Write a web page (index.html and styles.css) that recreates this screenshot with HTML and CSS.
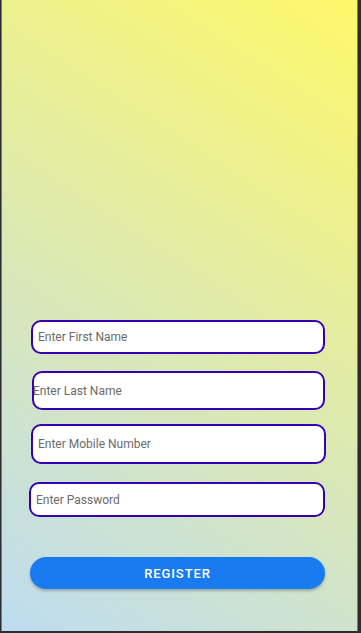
FILE: index.html
```html
<!DOCTYPE html>
<html lang="en">
<head>
<meta charset="utf-8">
<title>Register</title>
<link rel="stylesheet" href="styles.css">
</head>
<body>
<div class="frame">
  <form class="form">
    <input class="field field-first" type="text" placeholder="Enter First Name">
    <input class="field field-last" type="text" placeholder="Enter Last Name">
    <input class="field field-mobile" type="text" placeholder="Enter Mobile Number">
    <input class="field field-pass" type="password" placeholder="Enter Password">
    <button class="register" type="button">REGISTER</button>
  </form>
</div>
</body>
</html>
```

FILE: styles.css
```css
html, body {
  margin: 0;
  padding: 0;
}
body {
  width: 361px;
  height: 633px;
  background: #2b2d30;
  overflow: hidden;
  font-family: Roboto, "Noto Sans", sans-serif;
}
.frame {
  box-sizing: border-box;
  margin-left: 1px;
  width: 357px;
  height: 631px;
  border-left: 1px solid #2f8fe4;
  border-right: 1px solid #2f8fe4;
  background: linear-gradient(213deg, #fef86a 0%, #bedcf1 100%);
}
.form {
  display: flex;
  flex-direction: column;
  align-items: flex-start;
  padding-top: 320px;
  margin: 0;
}
.field {
  box-sizing: border-box;
  display: block;
  margin: 0;
  border: 2px solid #3700b3;
  border-radius: 10px;
  background: #ffffff;
  padding: 0 0 0 5px;
  font-family: Roboto, "Noto Sans", sans-serif;
  font-size: 12px;
  color: #555555;
  outline: none;
}
.field::placeholder {
  color: #6b6b6b;
  opacity: 1;
}
.field-first {
  margin-left: 29px;
  width: 294px;
  height: 34px;
}
.field-last {
  margin-top: 17px;
  margin-left: 30px;
  width: 293px;
  height: 39px;
  padding-left: 0;
  text-indent: -1px;
}
.field-mobile {
  margin-top: 14px;
  margin-left: 29px;
  width: 295px;
  height: 40px;
}
.field-pass {
  margin-top: 18px;
  margin-left: 27px;
  width: 296px;
  height: 35px;
}
.register {
  margin-top: 40px;
  margin-left: 28px;
  width: 295px;
  height: 32px;
  border: none;
  border-radius: 16px;
  background: #1a7bf1;
  color: #ffffff;
  font-family: Roboto, "Noto Sans", sans-serif;
  font-weight: 500;
  font-size: 13px;
  letter-spacing: 0.9px;
  box-shadow: 0 2px 3px rgba(0, 0, 0, 0.25);
  padding: 0;
}
```
